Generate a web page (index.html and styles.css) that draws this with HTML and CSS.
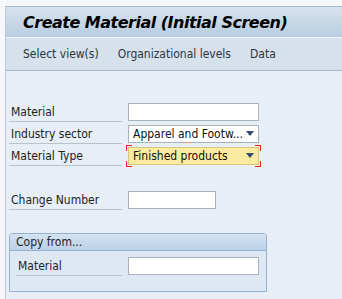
FILE: index.html
```html
<!DOCTYPE html>
<html>
<head>
<meta charset="utf-8">
<link rel="stylesheet" href="styles.css">
</head>
<body>
<div class="frame">
  <div class="titlebar"><h1 class="title">Create Material (Initial Screen)</h1></div>
  <div class="toolbar">
    <span class="tb-item">Select view(s)</span>
    <span class="tb-item">Organizational levels</span>
    <span class="tb-item">Data</span>
  </div>
  <div class="content">
    <div class="form">
      <div class="row">
        <label class="lbl">Material</label>
        <div class="field"><div class="input wide"></div></div>
      </div>
      <div class="row">
        <label class="lbl">Industry sector</label>
        <div class="field"><div class="input wide select"><span class="val">Apparel and Footw...</span><span class="arrow"></span></div></div>
      </div>
      <div class="row">
        <label class="lbl">Material Type</label>
        <div class="field"><div class="input wide select req"><span class="val">Finished products</span><span class="arrow"></span><span class="corner tl"></span><span class="corner tr"></span><span class="corner bl"></span><span class="corner br"></span></div></div>
      </div>
    </div>
    <div class="form gap">
      <div class="row">
        <label class="lbl">Change Number</label>
        <div class="field"><div class="input short"></div></div>
      </div>
    </div>
    <div class="group">
      <div class="group-head">Copy from...</div>
      <div class="group-body">
        <div class="row">
          <label class="lbl inner">Material</label>
          <div class="field"><div class="input wide"></div></div>
        </div>
      </div>
    </div>
  </div>
</div>
</body>
</html>
```
FILE: styles.css
```css
html, body {
  margin: 0;
  padding: 0;
}
body {
  width: 342px;
  height: 299px;
  overflow: hidden;
  background: #f5f7fa;
  font-family: "DejaVu Sans Condensed", "DejaVu Sans", sans-serif;
  font-stretch: condensed;
  font-size: 12px;
  color: #1e1e1e;
}
.frame {
  margin-top: 6px;
  margin-left: 5px;
  border-left: 1px solid #bccad8;
  height: 293px;
  background: #e8eef5;
}
.titlebar {
  height: 30px;
  border-top: 1px solid #a7b9cc;
  background: linear-gradient(#d7e3ee, #b7cde1);
  display: flex;
  align-items: center;
  padding-left: 17px;
}
.title {
  margin: 0;
  font-family: "DejaVu Sans", sans-serif;
  font-stretch: normal;
  font-size: 16px;
  font-weight: bold;
  font-style: italic;
  color: #000;
  letter-spacing: -0.5px;
}
.toolbar {
  height: 32px;
  border-top: 1px solid #eef3f8;
  border-bottom: 1px solid #a9b8c7;
  background: #d6e1ec;
  display: flex;
  align-items: center;
  gap: 19px;
  padding-left: 17px;
}
.tb-item {
  color: #2b3642;
  font-size: 12px;
}
.content {
  padding: 30px 0 0 3px;
}
.form {
  display: flex;
  flex-direction: column;
  gap: 1px;
}
.form.gap {
  margin-top: 23px;
}
.row {
  display: flex;
  align-items: flex-end;
  height: 21px;
}
.lbl {
  width: 111px;
  height: 20px;
  line-height: 22px;
  padding-left: 2px;
  border-bottom: 1px solid #b8c2cc;
  color: #1e1e1e;
}
.field {
  margin-left: 6px;
  height: 21px;
  display: flex;
  align-items: center;
}
.input {
  box-sizing: border-box;
  height: 18px;
  background: #fff;
  border: 1px solid #a9b1ba;
  position: relative;
}
.input.wide {
  width: 131px;
}
.input.short {
  width: 88px;
}
.select {
  display: flex;
  align-items: center;
  padding-left: 4px;
}
.val {
  flex: 1;
  white-space: nowrap;
  overflow: hidden;
  color: #111;
}
.arrow {
  width: 0;
  height: 0;
  border-left: 4px solid transparent;
  border-right: 4px solid transparent;
  border-top: 5px solid #2f4b6e;
  margin-right: 4px;
  margin-left: 3px;
}
.req {
  background: #fbeba0;
  border-color: #d7c77a;
}
.corner {
  position: absolute;
  width: 5px;
  height: 5px;
  border-color: #e0262b;
  border-style: solid;
  border-width: 0;
}
.corner.tl { left: -3px; top: -3px; border-left-width: 1px; border-top-width: 1px; }
.corner.tr { right: -3px; top: -3px; border-right-width: 1px; border-top-width: 1px; }
.corner.bl { left: -3px; bottom: -3px; border-left-width: 1px; border-bottom-width: 1px; }
.corner.br { right: -3px; bottom: -3px; border-right-width: 1px; border-bottom-width: 1px; }
.group {
  margin-top: 23px;
  width: 256px;
  border: 1px solid #95b3d0;
  border-radius: 3px 3px 0 0;
  background: #dde8f3;
}
.group-head {
  height: 16px;
  line-height: 16px;
  padding-left: 6px;
  background: linear-gradient(#d3e3f2, #bcd2e9);
  border-bottom: 1px solid #95b3d0;
  color: #1e1e1e;
}
.group-body {
  padding: 4px 0 15px 6px;
}
.lbl.inner {
  width: 104px;
}
.group-body .field {
  margin-left: 6px;
}
```
